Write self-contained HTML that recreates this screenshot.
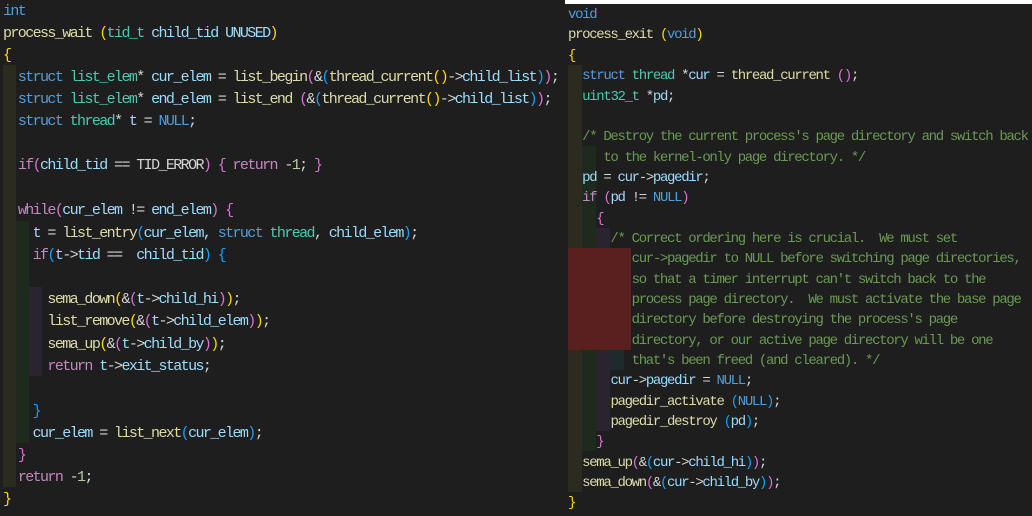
<!DOCTYPE html>
<html><head><meta charset="utf-8"><style>
html,body{margin:0;padding:0;}
body{width:1032px;height:516px;background:#1e1e1e;position:relative;overflow:hidden;font-family:"Liberation Mono",monospace;}
.b{position:absolute;}
.l{position:absolute;white-space:pre;color:#d4d4d4;}
.L .l{font-size:15px;letter-spacing:-1.6px;left:3px;line-height:22px;margin-top:2px;}
.R .l{font-size:14px;letter-spacing:-1.33px;left:568px;line-height:20px;margin-top:1px;}
.k{color:#569cd6}.t{color:#4ec9b0}.f{color:#dcdcaa}.v{color:#9cdcfe}.c{color:#c586c0}.g{color:#6a9955}
.y{color:#ffd700}.p{color:#da70d6}.u{color:#179fff}.n{color:#b5cea8}.m{color:#4fc1ff}
</style></head><body>
<div class="b" style="left:3px;top:65px;width:13px;height:422px;background:#2b2b1f"></div>
<div class="b" style="left:16px;top:221px;width:13px;height:222px;background:#1f2a1f"></div>
<div class="b" style="left:29px;top:287px;width:13px;height:89px;background:#2a2430"></div>
<div class="b" style="left:565px;top:0;width:467px;height:4px;background:#fff"></div>
<div class="b" style="left:568px;top:65px;width:14px;height:427px;background:#2b2b1f"></div>
<div class="b" style="left:582px;top:146px;width:14px;height:305px;background:#1f2a1f"></div>
<div class="b" style="left:596px;top:228px;width:14px;height:203px;background:#2a2430"></div>
<div class="b" style="left:610px;top:330px;width:14px;height:40px;background:#1f2a2c"></div>
<div class="b" style="left:568px;top:248px;width:63px;height:102px;background:#5a1f1f"></div>
<div class="L">
<div class="l" style="top:-1px"><span class="k">int</span></div>
<div class="l" style="top:21px"><span class="f">process_wait</span> <span class="y">(</span><span class="t">tid_t</span> <span class="v">child_tid</span> <span class="v">UNUSED</span><span class="y">)</span></div>
<div class="l" style="top:43px"><span class="y">{</span></div>
<div class="l" style="top:65px">  <span class="k">struct</span> <span class="t">list_elem</span>* <span class="v">cur_elem</span> = <span class="f">list_begin</span><span class="p">(</span>&amp;<span class="u">(</span><span class="f">thread_current</span><span class="y">()</span>-&gt;<span class="v">child_list</span><span class="u">)</span><span class="p">)</span>;</div>
<div class="l" style="top:87px">  <span class="k">struct</span> <span class="t">list_elem</span>* <span class="v">end_elem</span> = <span class="f">list_end</span> <span class="p">(</span>&amp;<span class="u">(</span><span class="f">thread_current</span><span class="y">()</span>-&gt;<span class="v">child_list</span><span class="u">)</span><span class="p">)</span>;</div>
<div class="l" style="top:109px">  <span class="k">struct</span> <span class="t">thread</span>* <span class="v">t</span> = <span class="k">NULL</span>;</div>
<div class="l" style="top:153px">  <span class="c">if</span><span class="p">(</span><span class="v">child_tid</span> == TID_ERROR<span class="p">)</span> <span class="p">{</span> <span class="c">return</span> -<span class="n">1</span>; <span class="p">}</span></div>
<div class="l" style="top:198px">  <span class="c">while</span><span class="p">(</span><span class="v">cur_elem</span> != <span class="v">end_elem</span><span class="p">)</span> <span class="p">{</span></div>
<div class="l" style="top:221px">    <span class="v">t</span> = <span class="f">list_entry</span><span class="u">(</span><span class="v">cur_elem</span>, <span class="k">struct</span> <span class="t">thread</span>, <span class="v">child_elem</span><span class="u">)</span>;</div>
<div class="l" style="top:243px">    <span class="c">if</span><span class="u">(</span><span class="v">t</span>-&gt;<span class="v">tid</span> ==  <span class="v">child_tid</span><span class="u">)</span> <span class="u">{</span></div>
<div class="l" style="top:287px">      <span class="f">sema_down</span><span class="y">(</span>&amp;<span class="p">(</span><span class="v">t</span>-&gt;<span class="v">child_hi</span><span class="p">)</span><span class="y">)</span>;</div>
<div class="l" style="top:309px">      <span class="f">list_remove</span><span class="y">(</span>&amp;<span class="p">(</span><span class="v">t</span>-&gt;<span class="v">child_elem</span><span class="p">)</span><span class="y">)</span>;</div>
<div class="l" style="top:332px">      <span class="f">sema_up</span><span class="y">(</span>&amp;<span class="p">(</span><span class="v">t</span>-&gt;<span class="v">child_by</span><span class="p">)</span><span class="y">)</span>;</div>
<div class="l" style="top:354px">      <span class="c">return</span> <span class="v">t</span>-&gt;<span class="v">exit_status</span>;</div>
<div class="l" style="top:399px">    <span class="u">}</span></div>
<div class="l" style="top:421px">    <span class="v">cur_elem</span> = <span class="f">list_next</span><span class="u">(</span><span class="v">cur_elem</span><span class="u">)</span>;</div>
<div class="l" style="top:443px">  <span class="p">}</span></div>
<div class="l" style="top:465px">  <span class="c">return</span> -<span class="n">1</span>;</div>
<div class="l" style="top:487px"><span class="y">}</span></div>
</div>
<div class="R">
<div class="l" style="top:4px"><span class="k">void</span></div>
<div class="l" style="top:24px"><span class="f">process_exit</span> <span class="y">(</span><span class="k">void</span><span class="y">)</span></div>
<div class="l" style="top:45px"><span class="y">{</span></div>
<div class="l" style="top:65px">  <span class="k">struct</span> <span class="t">thread</span> *<span class="v">cur</span> = <span class="f">thread_current</span> <span class="p">()</span>;</div>
<div class="l" style="top:86px">  <span class="t">uint32_t</span> *<span class="v">pd</span>;</div>
<div class="l g" style="top:126px">  /* Destroy the current process's page directory and switch back</div>
<div class="l g" style="top:147px">     to the kernel-only page directory. */</div>
<div class="l" style="top:167px">  <span class="v">pd</span> = <span class="v">cur</span>-&gt;<span class="v">pagedir</span>;</div>
<div class="l" style="top:187px">  <span class="c">if</span> <span class="p">(</span><span class="v">pd</span> != <span class="k">NULL</span><span class="p">)</span></div>
<div class="l" style="top:208px">    <span class="p">{</span></div>
<div class="l g" style="top:228px">      /* Correct ordering here is crucial.  We must set</div>
<div class="l g" style="top:248px">         cur-&gt;pagedir to NULL before switching page directories,</div>
<div class="l g" style="top:269px">         so that a timer interrupt can't switch back to the</div>
<div class="l g" style="top:289px">         process page directory.  We must activate the base page</div>
<div class="l g" style="top:309px">         directory before destroying the process's page</div>
<div class="l g" style="top:330px">         directory, or our active page directory will be one</div>
<div class="l g" style="top:350px">         that's been freed (and cleared). */</div>
<div class="l" style="top:370px">      <span class="v">cur</span>-&gt;<span class="v">pagedir</span> = <span class="k">NULL</span>;</div>
<div class="l" style="top:391px">      <span class="f">pagedir_activate</span> <span class="u">(</span><span class="k">NULL</span><span class="u">)</span>;</div>
<div class="l" style="top:411px">      <span class="f">pagedir_destroy</span> <span class="u">(</span><span class="v">pd</span><span class="u">)</span>;</div>
<div class="l" style="top:431px">    <span class="p">}</span></div>
<div class="l" style="top:452px">  <span class="f">sema_up</span><span class="p">(</span>&amp;<span class="u">(</span><span class="v">cur</span>-&gt;<span class="v">child_hi</span><span class="u">)</span><span class="p">)</span>;</div>
<div class="l" style="top:472px">  <span class="f">sema_down</span><span class="p">(</span>&amp;<span class="u">(</span><span class="v">cur</span>-&gt;<span class="v">child_by</span><span class="u">)</span><span class="p">)</span>;</div>
<div class="l" style="top:492px"><span class="y">}</span></div>
</div>
</body></html>
